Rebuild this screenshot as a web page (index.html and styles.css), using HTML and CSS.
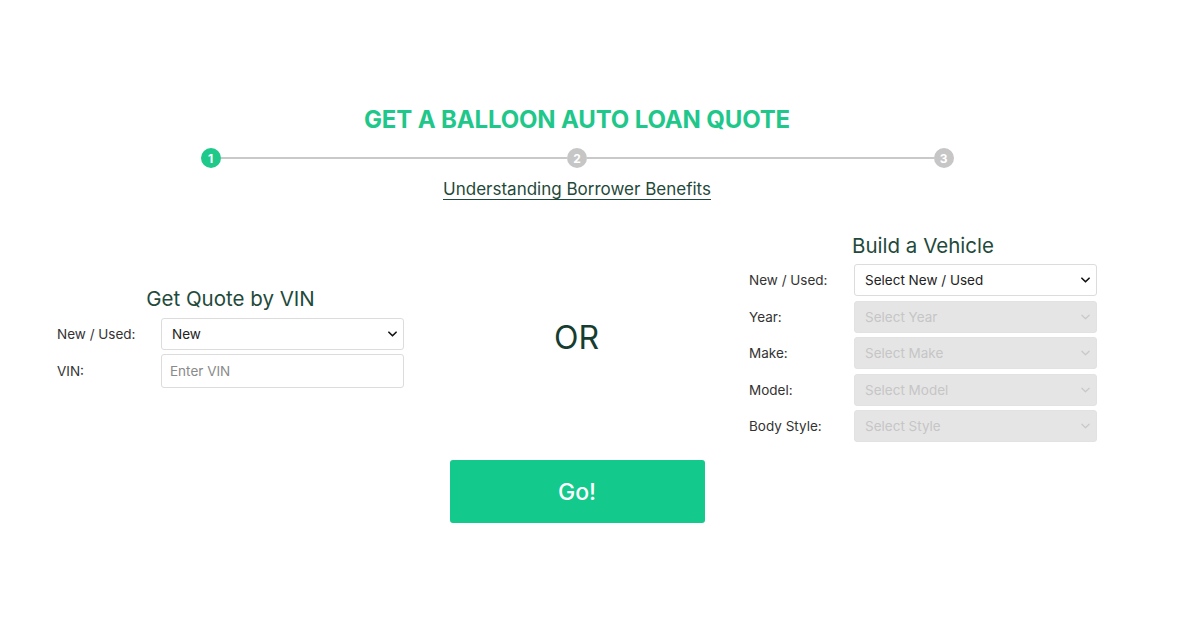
FILE: index.html
```html
<!DOCTYPE html>
<html lang="en">
<head>
<meta charset="utf-8">
<title>Get a Balloon Auto Loan Quote</title>
<link rel="stylesheet" href="styles.css">
</head>
<body>
<div class="page">
  <header class="header">
    <h1 class="title">GET A BALLOON AUTO LOAN QUOTE</h1>
    <div class="stepper">
      <span class="step active">1</span>
      <span class="line"></span>
      <span class="step">2</span>
      <span class="line"></span>
      <span class="step">3</span>
    </div>
    <a class="step-link" href="#">Understanding Borrower Benefits</a>
  </header>

  <main class="forms">
    <section class="panel">
      <h2 class="panel-title">Get Quote by VIN</h2>
      <div class="rows">
        <div class="row">
          <label class="label">New / Used:</label>
          <div class="field">
            <select class="select"><option>New</option></select>
            <svg class="chev" viewBox="0 0 10 6" width="9" height="6"><path d="M1 1l4 4 4-4" fill="none" stroke="#111" stroke-width="1.8" stroke-linecap="round" stroke-linejoin="round"/></svg>
          </div>
        </div>
        <div class="row">
          <label class="label">VIN:</label>
          <div class="field">
            <input class="input" type="text" placeholder="Enter VIN">
          </div>
        </div>
      </div>
    </section>

    <div class="or">OR</div>

    <section class="panel panel-right">
      <h2 class="panel-title">Build a Vehicle</h2>
      <div class="rows">
        <div class="row">
          <label class="label">New / Used:</label>
          <div class="field">
            <select class="select"><option>Select New / Used</option></select>
            <svg class="chev" viewBox="0 0 10 6" width="9" height="6"><path d="M1 1l4 4 4-4" fill="none" stroke="#111" stroke-width="1.8" stroke-linecap="round" stroke-linejoin="round"/></svg>
          </div>
        </div>
        <div class="row">
          <label class="label">Year:</label>
          <div class="field">
            <select class="select" disabled><option>Select Year</option></select>
            <svg class="chev" viewBox="0 0 10 6" width="9" height="6"><path d="M1 1l4 4 4-4" fill="none" stroke="#c9c9c9" stroke-width="1.4" stroke-linecap="round" stroke-linejoin="round"/></svg>
          </div>
        </div>
        <div class="row">
          <label class="label">Make:</label>
          <div class="field">
            <select class="select" disabled><option>Select Make</option></select>
            <svg class="chev" viewBox="0 0 10 6" width="9" height="6"><path d="M1 1l4 4 4-4" fill="none" stroke="#c9c9c9" stroke-width="1.4" stroke-linecap="round" stroke-linejoin="round"/></svg>
          </div>
        </div>
        <div class="row">
          <label class="label">Model:</label>
          <div class="field">
            <select class="select" disabled><option>Select Model</option></select>
            <svg class="chev" viewBox="0 0 10 6" width="9" height="6"><path d="M1 1l4 4 4-4" fill="none" stroke="#c9c9c9" stroke-width="1.4" stroke-linecap="round" stroke-linejoin="round"/></svg>
          </div>
        </div>
        <div class="row">
          <label class="label">Body Style:</label>
          <div class="field">
            <select class="select" disabled><option>Select Style</option></select>
            <svg class="chev" viewBox="0 0 10 6" width="9" height="6"><path d="M1 1l4 4 4-4" fill="none" stroke="#c9c9c9" stroke-width="1.4" stroke-linecap="round" stroke-linejoin="round"/></svg>
          </div>
        </div>
      </div>
    </section>
  </main>

  <div class="actions">
    <button class="go" type="button">Go!</button>
  </div>
</div>
</body>
</html>
```

FILE: styles.css
```css
* { box-sizing: border-box; }

html, body {
  margin: 0;
  padding: 0;
  background: #ffffff;
}

body {
  font-family: Inter, "Noto Sans", "Liberation Sans", sans-serif;
  color: #333;
}

.page {
  width: 1154px;
  height: 628px;
  overflow: hidden;
}

.header {
  padding-top: 105px;
  display: flex;
  flex-direction: column;
  align-items: center;
}

.title {
  margin: 0;
  font-size: 24px;
  line-height: 30px;
  font-weight: 700;
  color: #1fc78b;
  letter-spacing: -0.15px;
}

.stepper {
  margin-top: 13px;
  width: 753px;
  display: flex;
  align-items: center;
}

.step {
  width: 20px;
  height: 20px;
  flex: 0 0 20px;
  border-radius: 50%;
  background: #c6c6c6;
  color: #fff;
  font-size: 12px;
  font-weight: 700;
  display: flex;
  align-items: center;
  justify-content: center;
}

.step.active { background: #1ec98b; }

.line {
  flex: 1;
  height: 2px;
  background: #c9c9c9;
}

.step-link {
  margin-top: 11px;
  font-size: 17px;
  line-height: 20px;
  color: #1f4a3b;
  text-decoration: none;
  padding-bottom: 0;
  border-bottom: 1px solid #1f4a3b;
}

.forms {
  margin-top: 33px;
  padding-left: 57px;
  display: grid;
  grid-template-columns: 347px 345px 348px;
  align-items: center;
}

.panel-title {
  margin: 0;
  text-align: center;
  font-size: 20.5px;
  line-height: 24px;
  font-weight: 400;
  color: #1f4a3b;
}

.panel-right .panel-title { transform: translateY(1px); }

.rows {
  margin-top: 7px;
  display: flex;
  flex-direction: column;
  gap: 4.5px;
}

.row {
  display: flex;
  align-items: center;
}

.label {
  width: 104px;
  flex: 0 0 104px;
  font-size: 13.5px;
  color: #333;
}

.panel-right .label {
  width: 105px;
  flex-basis: 105px;
}

.field {
  position: relative;
  width: 243px;
  flex: 0 0 243px;
}

.select, .input {
  display: block;
  width: 100%;
  height: 32px;
  margin: 0;
  padding: 0 10px;
  font-family: inherit;
  font-size: 13.5px;
  color: #222;
  background: #fff;
  border: 1px solid #dcdcdc;
  border-radius: 3px;
  outline: none;
}

.select {
  appearance: none;
  -webkit-appearance: none;
}

.select:disabled {
  background: #e5e5e5;
  border-color: #e2e2e2;
  color: #c6c6c6;
  opacity: 1;
}

.input { height: 34px; padding-left: 8px; }

.input::placeholder { color: #8a8a8a; }

.chev {
  position: absolute;
  right: 7px;
  top: 13px;
  pointer-events: none;
}

.or {
  text-align: center;
  font-size: 32px;
  line-height: 40px;
  font-weight: 400;
  color: #163d30;
}

.actions {
  margin-top: 18px;
  display: flex;
  justify-content: center;
}

.go {
  width: 255px;
  height: 63px;
  border: none;
  border-radius: 3px;
  background: #13c98c;
  color: #fff;
  font-family: inherit;
  font-size: 23px;
  font-weight: 500;
  cursor: pointer;
}
```
